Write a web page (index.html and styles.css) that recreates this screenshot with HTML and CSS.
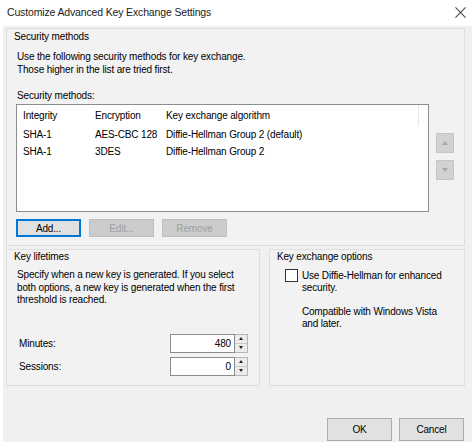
FILE: index.html
```html
<!DOCTYPE html>
<html>
	<head>
		<meta charset="utf-8">
		<title>Customize Advanced Key Exchange Settings</title>
		<link rel="stylesheet" href="styles.css">
	</head>
	<body>
		<!--标题栏-->
		<div class="titlebar">
			<span class="title">Customize Advanced Key Exchange Settings</span>
			<svg class="close" viewBox="0 0 12 12">
				<path d="M0.5 0.5 L11.5 11.5 M11.5 0.5 L0.5 11.5" stroke="#444" stroke-width="1.1" fill="none" />
			</svg>
		</div>

		<div class="dialog">
			<!--Security methods-->
			<div class="group group-methods">
				<div class="legend">Security methods</div>
				<p class="desc">Use the following security methods for key exchange.<br>Those higher in the list are tried first.</p>
				<div class="label">Security methods:</div>
				<div class="list-row">
					<div class="list">
						<div class="list-head">
							<span class="col col-int">Integrity</span>
							<span class="col col-enc">Encryption</span>
							<span class="col col-key">Key exchange algorithm</span>
						</div>
						<div class="list-item">
							<span class="col col-int">SHA-1</span>
							<span class="col col-enc">AES-CBC 128</span>
							<span class="col col-key">Diffie-Hellman Group 2 (default)</span>
						</div>
						<div class="list-item">
							<span class="col col-int">SHA-1</span>
							<span class="col col-enc">3DES</span>
							<span class="col col-key">Diffie-Hellman Group 2</span>
						</div>
					</div>
					<div class="order">
						<button class="order-btn" disabled><i class="arrow-up"></i></button>
						<button class="order-btn" disabled><i class="arrow-down"></i></button>
					</div>
				</div>
				<div class="button-row">
					<button class="btn focused">Add...</button>
					<button class="btn" disabled>Edit...</button>
					<button class="btn" disabled>Remove</button>
				</div>
			</div>

			<div class="groups">
				<!--Key lifetimes-->
				<div class="group group-lifetimes">
					<div class="legend">Key lifetimes</div>
					<p class="desc small">Specify when a new key is generated. If you select<br>both options, a new key is generated when the first<br>threshold is reached.</p>
					<div class="field first">
						<span class="field-label">Minutes:</span>
						<div class="spin">
							<input class="spin-input" type="text" value="480">
							<div class="spin-btns">
								<span class="spin-btn"><i class="tri-up"></i></span>
								<span class="spin-btn"><i class="tri-down"></i></span>
							</div>
						</div>
					</div>
					<div class="field">
						<span class="field-label">Sessions:</span>
						<div class="spin">
							<input class="spin-input" type="text" value="0">
							<div class="spin-btns">
								<span class="spin-btn"><i class="tri-up"></i></span>
								<span class="spin-btn"><i class="tri-down"></i></span>
							</div>
						</div>
					</div>
				</div>

				<!--Key exchange options-->
				<div class="group group-options">
					<div class="legend">Key exchange options</div>
					<div class="check">
						<span class="checkbox"></span>
						<p class="check-text">Use Diffie-Hellman for enhanced<br>security.<br><br>Compatible with Windows Vista<br>and later.</p>
					</div>
				</div>
			</div>

			<div class="footer">
				<button class="btn btn-big">OK</button>
				<button class="btn btn-big">Cancel</button>
			</div>
		</div>
	</body>
</html>
```

FILE: styles.css
```css
* {
	margin: 0;
	padding: 0;
	box-sizing: border-box;
}

body {
	width: 474px;
	height: 445px;
	background: white;
	font-family: "Liberation Sans", Arial, sans-serif;
	font-size: 10px;
	letter-spacing: -0.15px;
	color: #000;
	overflow: hidden;
}

.titlebar {
	height: 26px;
	display: flex;
	align-items: center;
	justify-content: space-between;
	padding: 0 7px 2px 7px;
}

.titlebar .title {
	font-size: 10.5px;
	color: #1a1a1a;
}

.titlebar .close {
	display: block;
	flex-shrink: 0;
	width: 11px;
	height: 11px;
	margin-right: 1px;
}

.dialog {
	width: 469px;
	height: 416px;
	margin-left: 3px;
	background: #f0f0f0;
	padding: 2px 7px 0 3px;
}

.group {
	border: 1px solid #dedede;
	background: #f2f2f2;
}

.legend {
	line-height: 14px;
	margin-left: 7px;
}

.desc {
	line-height: 13px;
	margin-left: 10px;
}

.desc.small {
	line-height: 12.5px;
}

.group-methods {
	width: 459px;
	height: 218px;
}

.group-methods .legend {
	margin-top: 1px;
}

.group-methods .desc {
	margin-top: 6px;
}

.label {
	line-height: 14px;
	margin: 13px 0 0 10px;
}

.list-row {
	display: flex;
	margin: 1px 0 0 9px;
}

.list {
	width: 413px;
	height: 108px;
	background: white;
	border: 1px solid #8c8c8c;
}

.list-head {
	display: flex;
	align-items: center;
	width: 402px;
	height: 21px;
	padding-left: 6px;
	border-right: 1px solid #e8e8e8;
}

.list-item {
	display: flex;
	align-items: center;
	height: 17px;
	padding-left: 6px;
}

.col-int {
	width: 72px;
}

.col-enc {
	width: 71px;
}

.order {
	display: flex;
	flex-direction: column;
	gap: 7px;
	margin: 29px 0 0 7px;
}

.order-btn {
	width: 18px;
	height: 20px;
	background: #d2d2d2;
	border: 1px solid #c6c6c6;
	display: flex;
	align-items: center;
	justify-content: center;
}

.arrow-up,
.arrow-down {
	width: 0;
	height: 0;
	border-left: 3.5px solid transparent;
	border-right: 3.5px solid transparent;
}

.arrow-up {
	border-bottom: 4px solid #a9a9a9;
}

.arrow-down {
	border-top: 4px solid #a9a9a9;
}

.button-row {
	display: flex;
	gap: 8px;
	margin: 7px 0 0 9px;
}

.btn {
	width: 65px;
	height: 18px;
	font-family: inherit;
	font-size: 10px;
	letter-spacing: -0.15px;
	color: #000;
	background: #e1e1e1;
	border: 1px solid #adadad;
}

.btn.focused {
	border: 2px solid #0078d7;
}

.btn:disabled {
	background: #cccccc;
	border-color: #bfbfbf;
	color: #a0a0a0;
}

.groups {
	display: flex;
	gap: 9px;
	margin-top: 3px;
}

.group-lifetimes,
.group-options {
	height: 137px;
}

.group-lifetimes {
	width: 255px;
}

.group-options {
	width: 197px;
}

.group-lifetimes .desc {
	margin-top: 5px;
}

.field {
	display: flex;
	align-items: center;
	justify-content: space-between;
	width: 229px;
	margin: 4px 0 0 12px;
}

.field.first {
	margin-top: 27px;
}

.spin {
	display: flex;
	width: 78px;
	height: 19px;
}

.spin-input {
	width: 65px;
	height: 19px;
	border: 1px solid #8c8c8c;
	background: white;
	text-align: right;
	padding-right: 3px;
	font-family: inherit;
	font-size: 10px;
	letter-spacing: -0.15px;
	outline: none;
}

.spin-btns {
	display: flex;
	flex-direction: column;
	width: 13px;
	border: 1px solid #b5b5b5;
	border-left: none;
}

.spin-btn {
	flex: 1;
	background: #ececec;
	display: flex;
	align-items: center;
	justify-content: center;
}

.spin-btn + .spin-btn {
	border-top: 1px solid #c8c8c8;
}

.tri-up,
.tri-down {
	width: 0;
	height: 0;
	border-left: 2.5px solid transparent;
	border-right: 2.5px solid transparent;
}

.tri-up {
	border-bottom: 3px solid #222;
}

.tri-down {
	border-top: 3px solid #222;
}

.check {
	display: flex;
	margin: 5px 0 0 15px;
}

.checkbox {
	width: 13px;
	height: 13px;
	border: 1px solid #333;
	background: white;
	flex-shrink: 0;
}

.check-text {
	line-height: 12px;
	margin-left: 4px;
	margin-top: 1px;
}

.footer {
	display: flex;
	justify-content: flex-end;
	gap: 7px;
	margin: 32px 1px 0 0;
}

.btn-big {
	height: 23px;
}
```
